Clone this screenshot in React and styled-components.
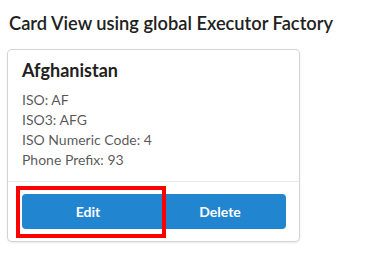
import React from 'react'
import styled, { createGlobalStyle } from 'styled-components'

const GlobalStyle = createGlobalStyle`
  body {
    margin: 0;
    background: #fff;
    font-family: Lato, 'Helvetica Neue', Arial, sans-serif;
    font-size: 14px;
    color: rgba(0, 0, 0, 0.87);
  }
`

const Page = styled.div`
  padding: 12px 8px;
`

const Title = styled.h3`
  margin: 0 0 14px 1px;
  font-size: 18.3px;
  line-height: 23px;
  font-weight: 600;
  color: #212121;
`

const Card = styled.div`
  width: 291px;
  margin-top: 15px;
  background: #fff;
  border-radius: 4px;
  box-shadow: 0 1px 3px 0 #d4d4d5, 0 0 0 1px #d4d4d5;
`

const Content = styled.div`
  padding: 13px 14px 11px;
`

const Header = styled.div`
  margin-top: -4px;
  font-size: 18px;
  line-height: 23px;
  font-weight: 700;
  color: #212121;
`

const Description = styled.div`
  margin-top: 8px;
  line-height: 20px;
  color: rgba(0, 0, 0, 0.68);
`

const Extra = styled.div`
  position: relative;
  display: flex;
  padding: 12px 13px 12px 14px;
  border-top: 1px solid rgba(34, 36, 38, 0.1);
`

const Button = styled.button`
  flex: 1;
  height: 35px;
  border: none;
  margin: 0;
  padding: 0;
  background: #2185d0;
  color: #fff;
  font-family: inherit;
  font-size: 14px;
  font-weight: 700;
  cursor: pointer;
  border-radius: ${(p) => (p.first ? '4px 0 0 4px' : '0 4px 4px 0')};
`

const Highlight = styled.div`
  position: absolute;
  left: 8px;
  top: 4px;
  width: 142px;
  height: 44px;
  border: 4px solid #ff0000;
  pointer-events: none;
`

const country = {
  name: 'Afghanistan',
  iso: 'AF',
  iso3: 'AFG',
  numeric: 4,
  phone: 93,
}

export default function App() {
  return (
    <>
      <GlobalStyle />
      <Page>
        <Title>Card View using global Executor Factory</Title>
        <Card>
          <Content>
            <Header>{country.name}</Header>
            <Description>
              <div>ISO: {country.iso}</div>
              <div>ISO3: {country.iso3}</div>
              <div>ISO Numeric Code: {country.numeric}</div>
              <div>Phone Prefix: {country.phone}</div>
            </Description>
          </Content>
          <Extra>
            <Button first>Edit</Button>
            <Button>Delete</Button>
            <Highlight />
          </Extra>
        </Card>
      </Page>
    </>
  )
}
